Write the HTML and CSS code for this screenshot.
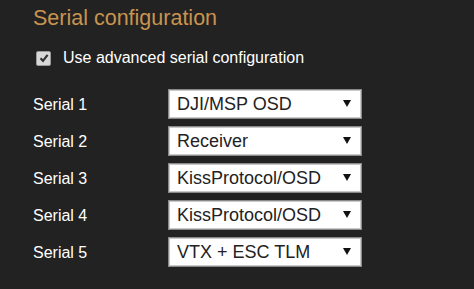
FILE: index.html
```html
<!DOCTYPE html>
<html>
<head>
<meta charset="utf-8">
<link rel="stylesheet" href="styles.css">
</head>
<body>
<div class="panel">
  <h1 class="title">Serial configuration</h1>
  <label class="check-row">
    <span class="checkbox">
      <svg width="10" height="10" viewBox="0 0 10 10"><path d="M1.5 5.2 L4 7.8 L8.6 1.8" fill="none" stroke="#333" stroke-width="2.2"/></svg>
    </span>
    <span class="check-label">Use advanced serial configuration</span>
  </label>
  <div class="grid">
    <div class="label">Serial 1</div>
    <div class="select"><span>DJI/MSP OSD</span><span class="arrow"></span></div>
    <div class="label">Serial 2</div>
    <div class="select"><span>Receiver</span><span class="arrow"></span></div>
    <div class="label">Serial 3</div>
    <div class="select"><span>KissProtocol/OSD</span><span class="arrow"></span></div>
    <div class="label">Serial 4</div>
    <div class="select"><span>KissProtocol/OSD</span><span class="arrow"></span></div>
    <div class="label">Serial 5</div>
    <div class="select"><span>VTX + ESC TLM</span><span class="arrow"></span></div>
  </div>
</div>
</body>
</html>
```
FILE: styles.css
```css
html, body {
  margin: 0;
  padding: 0;
  background: #222222;
  height: 100%;
}
body {
  font-family: "Liberation Sans", Arial, sans-serif;
  color: #ffffff;
}
.panel {
  padding: 5px 0 0 33px;
}
.title {
  margin: 0;
  font-size: 21.5px;
  font-weight: normal;
  line-height: 26px;
  color: #c8944f;
}
.check-row {
  display: flex;
  align-items: center;
  margin: 16px 0 0 3px;
  height: 22px;
}
.checkbox {
  width: 13px;
  height: 13px;
  background: #d8d8d8;
  border: 1px solid #9a9a9a;
  border-radius: 2px;
  display: flex;
  align-items: center;
  justify-content: center;
  margin-right: 12px;
}
.check-label {
  font-size: 16px;
}
.grid {
  display: grid;
  grid-template-columns: 135px 194px;
  row-gap: 7px;
  margin-top: 20px;
  align-items: center;
}
.label {
  font-size: 16px;
  padding-top: 2px;
}
.select {
  box-sizing: border-box;
  height: 30px;
  background: #ffffff;
  border: 2px solid #c9c9c9;
  outline: 1px solid #8a8a8a;
  outline-offset: -1px;
  display: flex;
  align-items: center;
  justify-content: space-between;
  padding: 0 9px 0 7px;
  color: #222222;
  font-size: 18px;
}
.arrow {
  width: 0;
  height: 0;
  border-left: 4px solid transparent;
  border-right: 4px solid transparent;
  border-top: 7px solid #111;
  margin-top: -1px;
}
```
